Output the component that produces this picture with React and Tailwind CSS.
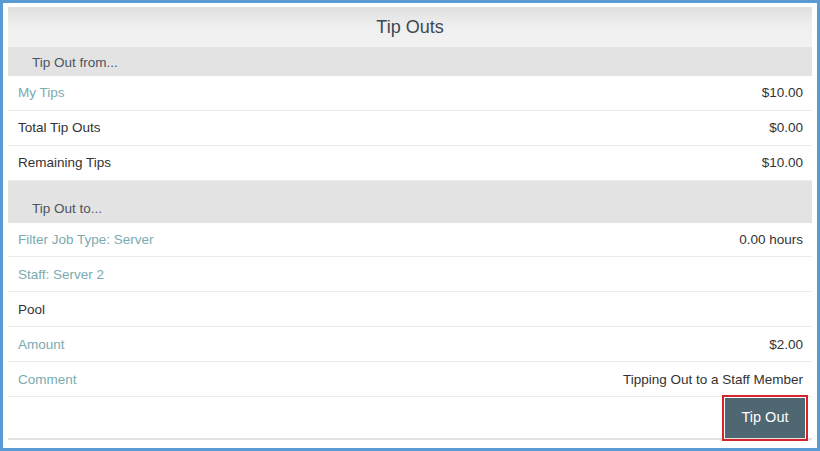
import React from "react";

const font = { fontFamily: '"Liberation Sans", Arial, sans-serif' };

function Row({ label, value, teal }) {
  return (
    <div className="flex h-[35px] items-center justify-between border-b border-[#ebebeb] pt-[1px] pl-[10px] pr-[9px] text-[13.5px]">
      <span className={teal ? "text-[#7aabb1]" : "text-[#333333]"}>{label}</span>
      <span className="text-[#333333]">{value}</span>
    </div>
  );
}

export default function App() {
  return (
    <div className="h-[451px] w-[820px] bg-white" style={font}>
      <div className="flex h-full w-full flex-col border-[3px] border-[#5b9bd5] bg-white px-[5px] pt-[4px] pb-[8px]">
        <div className="flex h-full flex-col">
          <div className="flex h-[40px] items-center justify-center bg-gradient-to-b from-[#e0e0e0] via-[#efefef] to-[#f2f2f2] pt-[1px] text-[18px] text-[#3b4954]">
            Tip Outs
          </div>
          <div className="flex h-[29px] items-center bg-[#e3e3e3] pt-[3px] pl-[24px] text-[13.5px] text-[#4a5561]">
            Tip Out from...
          </div>
          <Row label="My Tips" value="$10.00" teal />
          <Row label="Total Tip Outs" value="$0.00" />
          <Row label="Remaining Tips" value="$10.00" />
          <div className="flex h-[42px] items-end bg-[#e3e3e3] pb-[3px] pl-[24px] text-[13.5px] text-[#4a5561]">
            Tip Out to...
          </div>
          <Row label="Filter Job Type: Server" value="0.00 hours" teal />
          <Row label="Staff: Server 2" value="" teal />
          <Row label="Pool" value="" />
          <Row label="Amount" value="$2.00" teal />
          <Row label="Comment" value="Tipping Out to a Staff Member" teal />
          <div className="flex h-[43px] items-center justify-end border-b-2 border-[#e2e2e2] pr-[7px]">
            <button className="flex h-[40px] w-[80px] items-center justify-center bg-[#4f6673] text-[14.5px] text-white outline-2 outline-offset-1 outline-[#d3262c]">
              Tip Out
            </button>
          </div>
        </div>
      </div>
    </div>
  );
}
